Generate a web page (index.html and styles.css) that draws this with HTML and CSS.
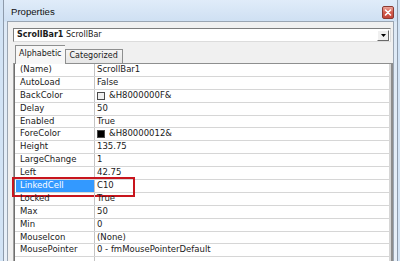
FILE: index.html
```html
<!DOCTYPE html>
<html>
<head>
<meta charset="utf-8">
<title>Properties</title>
<link rel="stylesheet" href="styles.css">
</head>
<body>
<div class="win">
  <div class="titlebar">
    <span class="title">Properties</span>
    <span class="close"><svg width="8" height="7" viewBox="0 0 8 7"><path d="M1.5 1 L6.5 6 M6.5 1 L1.5 6" stroke="#fff" stroke-width="1.6" stroke-linecap="round"/></svg></span>
  </div>
  <div class="client">
    <div class="combo">
      <span class="combo-text"><b>ScrollBar1</b> ScrollBar</span>
      <span class="drop"><svg width="5" height="3" viewBox="0 0 5 3"><path d="M0 0 H5 L2.5 3 Z" fill="#000"/></svg></span>
    </div>
    <div class="tabs">
      <span class="tab active">Alphabetic</span>
      <span class="tab">Categorized</span>
    </div>
    <div class="page">
      <div class="grid">
        <div class="row"><div class="name">(Name)</div><div class="val">ScrollBar1</div></div>
        <div class="row"><div class="name">AutoLoad</div><div class="val">False</div></div>
        <div class="row"><div class="name">BackColor</div><div class="val"><span class="swatch light"></span>&amp;H8000000F&amp;</div></div>
        <div class="row"><div class="name">Delay</div><div class="val">50</div></div>
        <div class="row"><div class="name">Enabled</div><div class="val">True</div></div>
        <div class="row"><div class="name">ForeColor</div><div class="val"><span class="swatch dark"></span>&amp;H80000012&amp;</div></div>
        <div class="row"><div class="name">Height</div><div class="val">135.75</div></div>
        <div class="row"><div class="name">LargeChange</div><div class="val">1</div></div>
        <div class="row"><div class="name">Left</div><div class="val">42.75</div></div>
        <div class="row linked"><div class="name selected">LinkedCell</div><div class="val">C10</div><span class="callout"></span></div>
        <div class="row"><div class="name">Locked</div><div class="val">True</div></div>
        <div class="row"><div class="name">Max</div><div class="val">50</div></div>
        <div class="row"><div class="name">Min</div><div class="val">0</div></div>
        <div class="row"><div class="name">MouseIcon</div><div class="val">(None)</div></div>
        <div class="row"><div class="name">MousePointer</div><div class="val">0 - fmMousePointerDefault</div></div>
        <div class="row"><div class="name"></div><div class="val"></div></div>
      </div>
      <div class="rightedge"></div>
    </div>
  </div>
</div>
</body>
</html>
```

FILE: styles.css
```css
* { box-sizing: border-box; }
html, body { margin: 0; padding: 0; }
body {
  width: 400px;
  height: 261px;
  overflow: hidden;
  background: #d2e3f5;
  font-family: "DejaVu Sans", sans-serif;
  font-size: 8px;
  color: #1a1a1a;
}
.win {
  margin-left: 3px;
  width: 395px;
  height: 261px;
  border-left: 1px solid #8e9bab;
  border-right: 1px solid #8e9bab;
  background: linear-gradient(#e0ecf9, #cfe0f3 21px, #dde9f6 22px, #e8f0f9);
  display: flex;
  flex-direction: column;
}
.titlebar {
  height: 21px;
  flex: none;
  display: flex;
  justify-content: space-between;
  align-items: flex-start;
  padding: 0 3px 0 7px;
}
.title {
  font-family: "Liberation Sans", Arial, sans-serif;
  font-size: 9.6px;
  line-height: 10px;
  margin-top: 7px;
  color: #111;
}
.close {
  width: 12px;
  height: 13px;
  margin-top: 6px;
  border: 1px solid #8a3a32;
  border-radius: 2px;
  background: linear-gradient(#eba59b, #d35a4c 50%, #c2463a);
  display: flex;
  align-items: center;
  justify-content: center;
}
.client {
  flex: 1;
  min-height: 0;
  margin: 0 3px;
  border: 1px solid #9aa5b2;
  border-bottom: none;
  background: #f0f0f0;
  padding: 6px 0 0 5px;
  display: flex;
  flex-direction: column;
}
.combo {
  height: 14px;
  margin-right: 2px;
  flex: none;
  background: #fff;
  border: 1px solid;
  border-color: #7d7d7d #dcdcdc #dcdcdc #7d7d7d;
  display: flex;
  align-items: center;
  justify-content: space-between;
  padding: 0 1px 0 3px;
}
.combo-text { line-height: 12px; white-space: nowrap; }
.combo-text b { font-weight: bold; }
.drop {
  width: 12px;
  height: 11px;
  background: #f0f0f0;
  border: 1px solid;
  border-color: #fff #6a6a6a #6a6a6a #fff;
  display: flex;
  align-items: center;
  justify-content: center;
}
.tabs {
  height: 18px;
  margin-top: 3px;
  flex: none;
  display: flex;
  align-items: flex-end;
  padding-left: 2px;
}
.tab {
  height: 14px;
  border: 1px solid #8e8f8f;
  border-bottom: none;
  padding: 0 4px;
  line-height: 11px;
  background: linear-gradient(#f4f4f4, #e6e6e6);
  white-space: nowrap;
}
.tab.active {
  height: 19px;
  margin-bottom: -1px;
  padding: 2px 3px 0;
  line-height: 12px;
  background: #f7f7f7;
  border-right: none;
  position: relative;
  z-index: 1;
}
.page {
  flex: 1;
  min-height: 0;
  border-top: 1px solid #8e8f8f;
  border-left: 1px solid #a0a0a0;
  display: flex;
}
.grid {
  flex: 1;
  background: #fff;
  border-left: 1px solid #6f6f6f;
}
.rightedge {
  width: 4px;
  background: linear-gradient(to right, #d6d6d6 0 2px, #8d8d8d 2px 4px);
}
.row {
  height: 12.9px;
  display: grid;
  grid-template-columns: 80px 1fr;
  border-bottom: 1px solid #d6d6d6;
  position: relative;
  font-size: 8.5px;
}
.name, .val {
  line-height: 11.9px;
  white-space: nowrap;
  overflow: hidden;
}
.name {
  padding-left: 5px;
  border-right: 1px solid #c4c4c4;
}
.val {
  padding-left: 2px;
  display: flex;
  align-items: center;
}
.name.selected {
  background: #3399ff;
  color: #fff;
  margin-left: 1px;
  padding-left: 4px;
}
.swatch {
  width: 8px;
  height: 8px;
  margin-right: 4px;
  border: 1px solid #4a4a4a;
  flex: none;
}
.swatch.light { background: #f0f0f0; }
.swatch.dark { background: #000; }
.callout {
  position: absolute;
  left: -3px;
  top: -3px;
  width: 123px;
  height: 20px;
  border: 2px solid #c8151d;
}
```
